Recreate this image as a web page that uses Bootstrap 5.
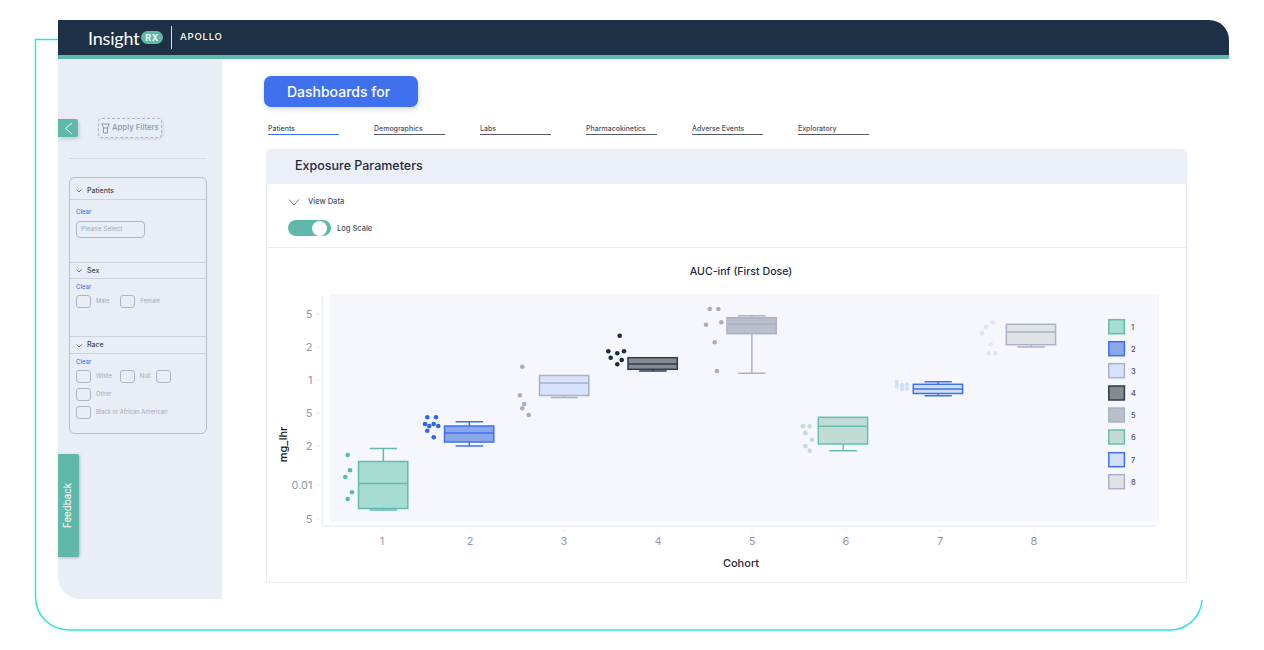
<!DOCTYPE html>
<html lang="en">

<head>
    <meta charset="UTF-8">
    <meta name="viewport" content="width=device-width, initial-scale=1.0">
    <title>InsightRX Apollo</title>
    <link href="https://cdn.jsdelivr.net/npm/bootstrap@5.3.0/dist/css/bootstrap.min.css" rel="stylesheet">
    <style>
        body { font-family: Inter, "Liberation Sans", sans-serif; background: #fff; overflow: hidden; }
        .stage { position: relative; width: 1264px; height: 650px; padding: 20px 35px 0 58px; }
        .frame-line { position: absolute; left: 0; top: 0; }
        .app-window { position: relative; width: 1171px; }

        .app-top { height: 39px; background: #1e3045; border-bottom: 4px solid #5fb8aa; border-top-right-radius: 20px; padding-left: 30px; color: #fff; }
        .logo-word { width: 51px; font-family: Lato, Inter, sans-serif; font-size: 18px; font-weight: 400; line-height: 1; letter-spacing: -.2px; margin-right: 2px; white-space: nowrap; }
        .logo-pill { background: #5fb8aa; border-radius: 7px; width: 22px; height: 13px; font-size: 9px; font-weight: 600; line-height: 13px; text-align: center; letter-spacing: .5px; }
        .logo-sep { width: 1px; height: 23px; background: #d8dee8; margin: 0 8px; }
        .logo-app { font-size: 9.5px; font-weight: 500; letter-spacing: .8px; }

        .side-panel { position: relative; width: 164px; height: 540px; background: #e9eef6; border-bottom-left-radius: 22px; padding-top: 59px; flex: none; }
        .collapse-tab { width: 20px; height: 18px; background: #5fb8aa; border-radius: 0 2px 2px 0; box-shadow: 1px 2px 4px rgba(30,48,69,.2); }
        .apply-btn { width: 64px; height: 20px; margin-left: 20px; border: 1px dashed #aeb5c7; border-radius: 4px; color: #8f97ad; font-size: 7.8px; font-weight: 500; gap: 2px; padding-left: 2px; box-shadow: 1px 1px 3px rgba(30,48,69,.12); }
        .side-rule { height: 1px; background: #d3d9e4; margin: 20px 16px 18px 11px; }
        .filter-box { width: 138px; height: 257px; margin-left: 11px; border: 1px solid #b6bdcd; border-radius: 6px; }
        .filter-head { border-bottom: 1px solid #ccd3e0; padding-left: 6px; gap: 5px; font-size: 7px; font-weight: 500; color: #3c4658; }
        .filter-head.first-one { padding-top: 5px; }
        .filter-head.next-one { border-top: 1px solid #ccd3e0; padding-top: 1px; }
        .filter-body { padding: 0 6px; }
        .clear-link { display: block; padding-top: 1px; font-size: 6px; font-weight: 500; line-height: 14px; color: #3f71ee; text-decoration: none; }
        .pick-field { width: 69px; height: 17px; margin-top: 2px; border: 1px solid #aeb5c7; border-radius: 4px; padding-left: 4px; font-size: 6.5px; line-height: 15px; color: #a2a9bb; }
        .tick-row { height: 14px; margin-bottom: 4px; font-size: 5.8px; color: #a2a9bb; }
        .tick-row span { padding-top: 1px; }
        .form-check-input.tick-box { width: 15px; height: 13px; margin: 0 5px 0 0; background-color: transparent; border: 1px solid #aeb5c7; border-radius: 3px; flex: none; }
        .form-check-input.tick-box.wide-gap { margin-left: 11px; }
        .form-check-input.tick-box.mid-gap { margin-left: 8px; }
        .form-check-input.tick-box.thin-gap { margin-left: 6px; }
        .feedback-tab { position: absolute; left: 0; top: 395px; width: 21px; height: 103px; background: #5fb8aa; border-radius: 0 2px 2px 0; box-shadow: 1px 1px 3px rgba(30,48,69,.25); color: #fff; font-size: 9.7px; font-weight: 400; }
        .feedback-tab span { writing-mode: vertical-rl; transform: rotate(180deg); }

        .main-panel { padding: 17px 0 0 42px; }
        .btn.dash-btn { width: 154px; height: 31px; padding: 0 5px 0 0; background: #3f71ee; border: 0; border-radius: 7px; font-size: 14px; font-weight: 500; line-height: 27px; box-shadow: 1px 2px 5px rgba(30,48,69,.2); }
        .tab-row { gap: 35px; margin: 16px 0 0 4px; }
        .tab-item { width: 71px; height: 12px; border-bottom: 1px solid #555b66; font-size: 7px; line-height: 11px; font-weight: 500; color: #4a5160; }
        .tab-item.on { border-bottom-color: #3f71ee; }
        .card.expo-card { width: 921px; height: 434px; margin: 14px 0 0 2px; border: 1px solid #e8edf6; border-radius: 4px 4px 0 0; }
        .card-header.expo-head { height: 34px; padding: 0 0 0 28px; background: #ebeff7; border: 0; font-size: 12.5px; line-height: 32px; font-weight: 500; color: #1f2a3d; }
        .view-row { height: 64px; border-bottom: 1px solid #e8edf6; padding: 9px 0 0 21px; font-size: 7.5px; font-weight: 500; color: #4a5160; }
        .view-line { height: 18px; gap: 8px; }
        .log-line { height: 16px; margin-top: 9px; gap: 6px; }
        .log-line span { padding-top: 1px; }
        .pill-toggle { width: 43px; height: 16px; background: #5fb8aa; border-radius: 8px; padding-right: 4px; }
        .pill-toggle i { width: 15px; height: 15px; background: #fff; border-radius: 50%; }
        .plot-svg { display: block; }
        .plot-svg text { font-family: Inter, "Liberation Sans", sans-serif; }
    </style>
</head>

<body>
    <div class="stage">
        <svg class="frame-line" width="1264" height="650" fill="none">
            <path d="M58 39.5H35.5V597a33 33 0 0 0 33 33H1170a32 32 0 0 0 32-30" stroke="#2ce6d8" stroke-width="1.5"/>
        </svg>

        <div class="app-window">
            <div class="app-top d-flex align-items-center">
                <span class="logo-word">Insight</span>
                <span class="logo-pill">RX</span>
                <span class="logo-sep"></span>
                <span class="logo-app">APOLLO</span>
            </div>

            <div class="d-flex">
                <div class="side-panel">
                    <div class="d-flex align-items-center">
                        <div class="collapse-tab d-flex align-items-center justify-content-center">
                            <svg width="9" height="13" fill="none" stroke="#fff" stroke-width=".9"><path d="M8 1 1.5 6.5 8 12"/></svg>
                        </div>
                        <div class="apply-btn d-flex align-items-center">
                            <svg width="9" height="11" fill="none" stroke="#8f97ad" stroke-width="1"><path d="M.5 1h8M1 1l1.5 4v5h4V5L8 1M2.5 5h4"/></svg>
                            Apply Filters
                        </div>
                    </div>
                    <div class="side-rule"></div>

                    <div class="filter-box">
                        <div class="filter-head first-one d-flex align-items-center" style="height:22px">
                            <svg width="6" height="4" fill="none" stroke="#4a5160" stroke-width=".8"><path d="M.5.5l2.5 2.5L5.5.5"/></svg>
                            Patients
                        </div>
                        <div class="filter-body pt-1" style="height:62px">
                            <a class="clear-link" href="#">Clear</a>
                            <div class="pick-field">Please Select</div>
                        </div>
                        <div class="filter-head next-one d-flex align-items-center" style="height:17px">
                            <svg width="6" height="4" fill="none" stroke="#4a5160" stroke-width=".8"><path d="M.5.5l2.5 2.5L5.5.5"/></svg>
                            Sex
                        </div>
                        <div class="filter-body" style="height:57px">
                            <a class="clear-link" href="#">Clear</a>
                            <div class="tick-row d-flex align-items-center">
                                <input class="form-check-input tick-box" type="checkbox"><span>Male</span>
                                <input class="form-check-input tick-box wide-gap" type="checkbox"><span>Female</span>
                            </div>
                        </div>
                        <div class="filter-head next-one d-flex align-items-center" style="height:18px">
                            <svg width="6" height="4" fill="none" stroke="#4a5160" stroke-width=".8"><path d="M.5.5l2.5 2.5L5.5.5"/></svg>
                            Race
                        </div>
                        <div class="filter-body">
                            <a class="clear-link" href="#">Clear</a>
                            <div class="tick-row d-flex align-items-center">
                                <input class="form-check-input tick-box" type="checkbox"><span>White</span>
                                <input class="form-check-input tick-box mid-gap" type="checkbox"><span>Null</span>
                                <input class="form-check-input tick-box thin-gap" type="checkbox">
                            </div>
                            <div class="tick-row d-flex align-items-center">
                                <input class="form-check-input tick-box" type="checkbox"><span>Other</span>
                            </div>
                            <div class="tick-row d-flex align-items-center">
                                <input class="form-check-input tick-box" type="checkbox"><span>Black or African American</span>
                            </div>
                        </div>
                    </div>

                    <div class="feedback-tab d-flex align-items-center justify-content-center"><span>Feedback</span></div>
                </div>

                <div class="main-panel">
                    <button class="btn btn-primary dash-btn" type="button">Dashboards for</button>
                    <div class="tab-row d-flex">
                        <div class="tab-item on">Patients</div>
                        <div class="tab-item">Demographics</div>
                        <div class="tab-item">Labs</div>
                        <div class="tab-item">Pharmacokinetics</div>
                        <div class="tab-item">Adverse Events</div>
                        <div class="tab-item">Exploratory</div>
                    </div>

                    <div class="card expo-card">
                        <div class="card-header expo-head">Exposure Parameters</div>
                        <div class="view-row">
                            <div class="view-line d-flex align-items-center">
                                <svg width="12" height="7" fill="none" stroke="#3c4658" stroke-width=".8"><path d="M1 .5l5 5.5 5-5.5"/></svg>
                                <span>View Data</span>
                            </div>
                            <div class="log-line d-flex align-items-center">
                                <div class="pill-toggle d-flex align-items-center justify-content-end"><i></i></div>
                                <span>Log Scale</span>
                            </div>
                        </div>
                        <svg id="plot" class="plot-svg" width="919" height="334" viewBox="267 248 919 334"></svg>
                    </div>
                </div>
            </div>
        </div>
    </div>

    <script src="https://cdn.jsdelivr.net/npm/bootstrap@5.3.0/dist/js/bootstrap.bundle.min.js"></script>
    <script>
        // x = box left; t, m, b = box top/median/bottom; hi, lo = whisker ends (null = none drawn)
        const cohorts = [
            { fill: '#a7dcd3', line: '#62bcae', dot: '#5ab9ab', x: 358.5, t: 461.5, m: 483.5, b: 508.5, hi: 448.5, lo: 510,
              dots: [[347.7,455],[350,470.3],[345.3,477],[352,492.3],[347.7,499]] },
            { fill: '#8aa7e9', line: '#3f71ee', dot: '#2f66ee', x: 444.5, t: 426, m: 433, b: 442, hi: 421.7, lo: 446,
              dots: [[427.3,417.3],[436,417.3],[425,424],[429.3,426],[433.7,424],[438.3,426],[427.3,430.7],[433.7,437.3]] },
            { fill: '#d8e2fa', line: '#a9b2c8', dot: '#a6adc2', x: 539.5, t: 375.5, m: 383, b: 395.5, hi: null, lo: 397.5,
              dots: [[522.3,366.7],[520,395.3],[524.3,404],[522.3,408.3],[528.7,415]] },
            { fill: '#868a8f', line: '#2c3c52', dot: '#1a2b42', x: 628, t: 357.7, m: 364, b: 369.3, hi: null, lo: 371,
              dots: [[619.7,335.7],[608.3,351.3],[624,351.3],[617.3,353.3],[610.7,357.7],[621.7,360],[617.3,364.3]] },
            { fill: '#b9bfcb', line: '#a9b2c8', dot: '#a6adc2', x: 727, t: 317.7, m: 324.3, b: 333.7, hi: 315.7, lo: 373.3,
              dots: [[709.7,309],[718.3,309],[706,324.7],[721.3,322.3],[714.7,342.3],[717,371]] },
            { fill: '#c2dcd5', line: '#66bfb0', dot: '#c0ddd6', x: 818.3, t: 417.3, m: 426.3, b: 444, hi: null, lo: 450.7,
              dots: [[803,426.3],[809.7,426.3],[805.3,433],[812,439.7],[805.3,446],[809.7,450.7]] },
            { fill: '#d2dffa', line: '#3f71ee', dot: '#d2dffa', x: 913.3, t: 384.3, m: 389, b: 393.5, hi: 381.7, lo: 395.7,
              dots: [[896.7,382],[896.7,386],[902,385],[907,384.5],[902,389],[907,389]] },
            { fill: '#e1e2e3', line: '#a9b2c8', dot: '#e3e4e6', x: 1006.3, t: 324.3, m: 332, b: 344.7, hi: null, lo: 347,
              dots: [[993,322.3],[986.3,326.7],[982,333.3],[990.7,344.3],[988.7,353.3],[995.3,353.3]] }
        ];
        const xTicks = [382, 470, 564, 658, 752, 846, 940, 1034];
        const yTicks = [['5',314],['2',347],['1',380],['5',413],['2',446],['0.01',485],['5',519]];
        const legendY = [326.7, 348.7, 370.7, 393, 415, 437, 459.7, 481.7];

        let out = '<rect x="330" y="294" width="829" height="228" fill="#f5f7fc"/>';
        out += '<path d="M322.5 296V526H1157" fill="none" stroke="#e9eef8" stroke-width="1.5"/>';

        yTicks.forEach(([label, y]) => {
            out += `<path d="M316 ${y}h3.5" stroke="#e4e7ef"/>`;
            out += `<text x="312.5" y="${y + 4}" text-anchor="end" font-size="11" fill="#8f97ad">${label}</text>`;
        });
        xTicks.forEach((x, i) => {
            out += `<path d="M${x} 529v3" stroke="#e4e7ef"/>`;
            out += `<text x="${x}" y="544.5" text-anchor="middle" font-size="11" fill="#8f97ad">${i + 1}</text>`;
        });

        out += '<text x="741" y="274.5" text-anchor="middle" font-size="10.6" font-weight="500" fill="#1f2a3d">AUC-inf (First Dose)</text>';
        out += '<text x="741" y="567" text-anchor="middle" font-size="11" font-weight="500" fill="#1f2a3d">Cohort</text>';
        out += '<text transform="translate(286.5 444.5) rotate(-90)" text-anchor="middle" font-size="11" font-weight="500" fill="#111a28">mg_lhr</text>';

        cohorts.forEach((c, i) => {
            const w = 49.3, cx = c.x + w / 2 + 0.2;
            c.dots.forEach(([x, y]) => { out += `<circle cx="${x}" cy="${y}" r="2.3" fill="${c.dot}"/>`; });
            const whisk = (from, to) => `<path d="M${cx} ${from}V${to}M${cx - 13.7} ${to}h27.4" stroke="${c.line}" stroke-width="1.5" fill="none"/>`;
            if (c.hi !== null) out += whisk(c.t, c.hi);
            out += whisk(c.b, c.lo);
            out += `<rect x="${c.x}" y="${c.t}" width="${w}" height="${c.b - c.t}" fill="${c.fill}" stroke="${c.line}" stroke-width="1.5"/>`;
            out += `<path d="M${c.x} ${c.m}h${w}" stroke="${c.line}" stroke-width="1.5"/>`;
            out += `<rect x="1108.8" y="${legendY[i] - 7}" width="15.6" height="14" fill="${c.fill}" stroke="${c.line}" stroke-width="1.5"/>`;
            out += `<text x="1131" y="${legendY[i] + 2.8}" font-size="7.5" font-weight="500" fill="#4a5160">${i + 1}</text>`;
        });

        document.getElementById('plot').innerHTML = out;
    </script>
</body>

</html>
